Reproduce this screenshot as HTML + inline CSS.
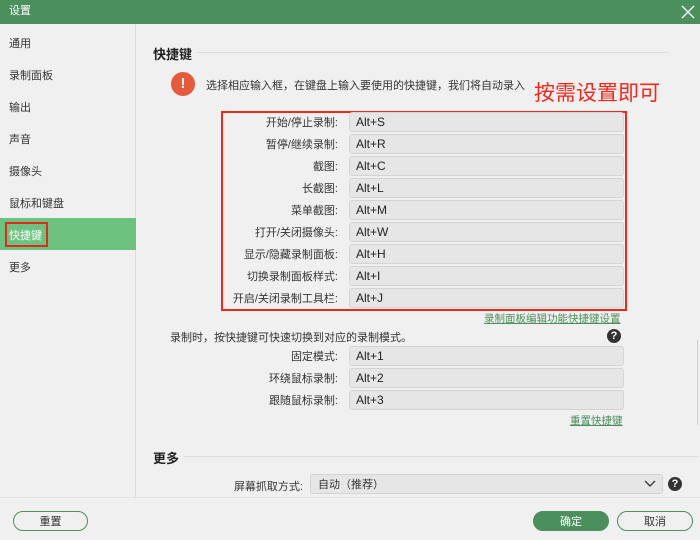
<!DOCTYPE html>
<html><head><meta charset="utf-8"><style>
*{margin:0;padding:0;box-sizing:border-box}
body{width:700px;height:540px;background:#f0f0f0;font-family:"Liberation Sans","Noto Sans CJK SC",sans-serif;font-size:12px;color:#333;position:relative;overflow:hidden}
.a{position:absolute}
.title{left:0;top:0;width:700px;height:24px;background:#4a8f5c;color:#fff;font-size:11px;line-height:22px;padding-left:9px}
.side{left:0;top:24px;width:136px;height:473px;border-right:1px solid #dcdcdc}
.si{position:absolute;left:9px;font-size:11px;color:#333}
.lbl{position:absolute;width:200px;text-align:right;font-size:11px;color:#333}
.inp{position:absolute;left:349px;width:275px;height:20px;background:#e6e6e6;border:1px solid #d4d4d4;border-radius:3px;padding-left:6px;display:flex;align-items:center;font-size:12px;color:#222}
.btn{position:absolute;top:511px;height:20px;border:1.5px solid #4a8f5c;border-radius:10px;display:flex;align-items:center;justify-content:center;font-size:11px;color:#333}
.link{color:#4a8f5c;text-decoration:underline;font-size:10.5px}
.q{position:absolute;width:14px;height:14px;border-radius:50%;background:#333;color:#fff;font-size:11px;font-weight:bold;text-align:center;line-height:14px}
</style></head><body>
<div class="a title">设置</div>
<svg class="a" style="left:681px;top:5px" width="14" height="14"><path d="M1 1L13 13M13 1L1 13" stroke="#fff" stroke-width="1.3"/></svg>
<div class="a side"></div>
<div class="si" style="top:35px">通用</div>
<div class="si" style="top:67px">录制面板</div>
<div class="si" style="top:99px">输出</div>
<div class="si" style="top:131px">声音</div>
<div class="si" style="top:163px">摄像头</div>
<div class="si" style="top:195px">鼠标和键盘</div>
<div class="a" style="left:0;top:218px;width:136px;height:32px;background:#6cc27f"></div>
<div class="a" style="left:5px;top:222px;width:43px;height:25px;border:2.5px solid #e8261a"></div>
<div class="si" style="top:227px;color:#fff">快捷键</div>
<div class="si" style="top:259px">更多</div>

<div class="a" style="left:153px;top:44px;font-size:13px;font-weight:bold;color:#222">快捷键</div>
<div class="a" style="left:197px;top:52px;width:472px;height:1px;background:#dcdcdc"></div>
<div class="a" style="left:171px;top:72px;width:24px;height:24px;border-radius:50%;background:#e55a3a;color:#fff;text-align:center;line-height:24px;font-weight:bold;font-size:15px">!</div>
<div class="a" style="left:206px;top:77px;font-size:11px;color:#333">选择相应输入框，在键盘上输入要使用的快捷键，我们将自动录入</div>
<div class="a" style="left:534px;top:77px;font-size:21px;color:#f5261a">按需设置即可</div>

<div class="a" style="left:221px;top:111px;width:406px;height:200px;border:2.5px solid #f0261a"></div>
<div class="lbl" style="left:138px;top:114px">开始/停止录制:</div><div class="inp" style="top:112px">Alt+S</div>
<div class="lbl" style="left:138px;top:136px">暂停/继续录制:</div><div class="inp" style="top:134px">Alt+R</div>
<div class="lbl" style="left:138px;top:158px">截图:</div><div class="inp" style="top:156px">Alt+C</div>
<div class="lbl" style="left:138px;top:180px">长截图:</div><div class="inp" style="top:178px">Alt+L</div>
<div class="lbl" style="left:138px;top:202px">菜单截图:</div><div class="inp" style="top:200px">Alt+M</div>
<div class="lbl" style="left:138px;top:224px">打开/关闭摄像头:</div><div class="inp" style="top:222px">Alt+W</div>
<div class="lbl" style="left:138px;top:246px">显示/隐藏录制面板:</div><div class="inp" style="top:244px">Alt+H</div>
<div class="lbl" style="left:138px;top:268px">切换录制面板样式:</div><div class="inp" style="top:266px">Alt+I</div>
<div class="lbl" style="left:138px;top:290px">开启/关闭录制工具栏:</div><div class="inp" style="top:288px">Alt+J</div>
<div class="a link" style="left:484px;top:311px">录制面板编辑功能快捷键设置</div>

<div class="a" style="left:170px;top:329px;font-size:11px">录制时，按快捷键可快速切换到对应的录制模式。</div>
<div class="q" style="left:607px;top:329px">?</div>
<div class="lbl" style="left:138px;top:348px">固定模式:</div><div class="inp" style="top:346px">Alt+1</div>
<div class="lbl" style="left:138px;top:370px">环绕鼠标录制:</div><div class="inp" style="top:368px">Alt+2</div>
<div class="lbl" style="left:138px;top:392px">跟随鼠标录制:</div><div class="inp" style="top:390px">Alt+3</div>
<div class="a link" style="left:570px;top:413px">重置快捷键</div>
<div class="a" style="left:697px;top:340px;width:1px;height:85px;background:#ccc"></div>

<div class="a" style="left:153px;top:448px;font-size:13px;font-weight:bold;color:#222">更多</div>
<div class="a" style="left:184px;top:456px;width:514px;height:1px;background:#dcdcdc"></div>
<div class="lbl" style="left:103px;top:478px">屏幕抓取方式:</div>
<div class="a" style="left:310px;top:474px;width:353px;height:20px;background:#e6e6e6;border:1px solid #d4d4d4;border-radius:3px;padding-left:7px;display:flex;align-items:center;font-size:11px">自动（推荐）</div>
<svg class="a" style="left:644px;top:480px" width="12" height="8"><path d="M1 1L6 6L11 1" stroke="#333" stroke-width="1.3" fill="none"/></svg>
<div class="q" style="left:668px;top:477px">?</div>

<div class="a" style="left:0;top:497px;width:700px;height:43px;background:#f0f0f0;border-top:1px solid #e4e4e4"></div>
<div class="btn" style="left:13px;width:75px">重置</div>
<div class="btn" style="left:533px;width:76px;background:#4a8f5c;color:#fff">确定</div>
<div class="btn" style="left:617px;width:76px">取消</div>
</body></html>
